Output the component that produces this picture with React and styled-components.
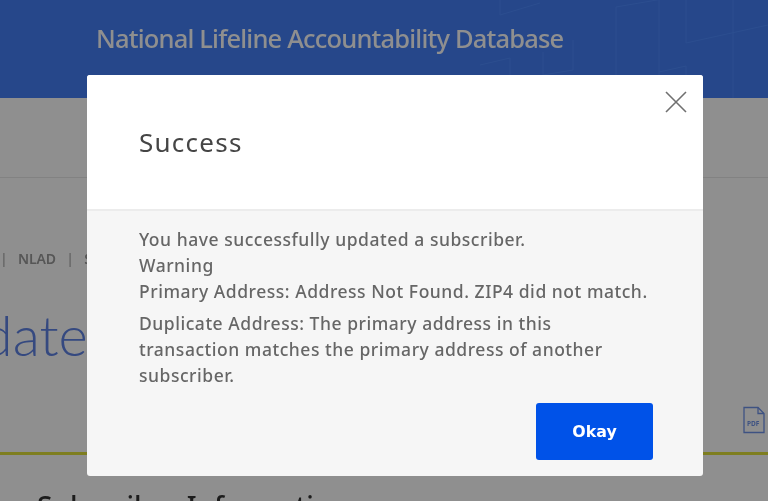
import React from "react";
import styled, { createGlobalStyle } from "styled-components";

const Global = createGlobalStyle`
  html, body { margin: 0; padding: 0; background: #fff; }
  body { font-family: "Open Sans", "Noto Sans", sans-serif; }
`;

const Viewport = styled.div`
  position: relative;
  width: 768px;
  height: 501px;
  overflow: hidden;
  filter: blur(0.5px);
`;

const Page = styled.div`
  display: flex;
  flex-direction: column;
  height: 100%;
  background: #fff;
`;

const Header = styled.header`
  position: relative;
  flex: 0 0 98px;
  box-sizing: border-box;
  padding: 21px 0 0 96px;
  background: #447ff6;
  overflow: hidden;
`;

const SiteTitle = styled.h1`
  margin: 0;
  font-family: "Noto Sans", sans-serif;
  font-size: 25.5px;
  line-height: 34px;
  font-weight: 500;
  letter-spacing: -0.82px;
  color: #fff;
`;

const HeaderLines = styled.svg`
  position: absolute;
  top: 0;
  right: 0;
  width: 300px;
  height: 98px;
  fill: none;
  stroke: #4f8bff;
  stroke-width: 1;
`;

const NavBar = styled.div`
  flex: 0 0 79px;
  border-bottom: 1px solid #e8e8e8;
`;

const Breadcrumbs = styled.div`
  flex: none;
  display: flex;
  gap: 10.3px;
  margin-top: 70px;
  height: 20px;
  align-items: center;
  font-family: "Noto Sans", sans-serif;
  font-size: 14px;
  font-weight: 600;
  letter-spacing: -0.1px;
`;

const Crumb = styled.span`
  color: ${(p) => (p.$sep ? "#b5b5b5" : "#999")};
`;

const TitleRow = styled.div`
  flex: none;
  display: flex;
  justify-content: space-between;
  height: 187px;
  box-sizing: border-box;
  border-bottom: 3px solid #e0e03a;
`;

const PageTitle = styled.h2`
  margin: 33px 0 0 -89px;
  font-family: "Lato", sans-serif;
  font-weight: 300;
  font-size: 56px;
  line-height: 68px;
  color: #5f83e4;
`;

const PdfIcon = styled.svg`
  width: 24px;
  height: 28px;
  margin: 138px 2px 0 0;
  flex: none;
`;

const SectionTitle = styled.h3`
  flex: none;
  margin: 33px 0 0 37px;
  font-family: "Noto Sans", sans-serif;
  font-weight: 500;
  font-size: 28px;
  line-height: 36px;
  white-space: nowrap;
  color: #333;
`;

const Scrim = styled.div`
  position: absolute;
  inset: 0;
  background: rgba(0, 0, 0, 0.44);
`;

const Modal = styled.div`
  position: absolute;
  left: 87px;
  top: 75px;
  width: 616px;
  height: 401px;
  display: flex;
  flex-direction: column;
  border-radius: 3px;
  overflow: hidden;
  background: #f6f6f6;
`;

const ModalHead = styled.div`
  position: relative;
  flex: 0 0 136px;
  box-sizing: border-box;
  padding: 49px 52px 0;
  background: #fff;
  border-bottom: 2px solid #ececec;
`;

const ModalTitle = styled.h4`
  margin: 0;
  font-family: "Noto Sans", sans-serif;
  font-weight: 400;
  font-size: 26px;
  line-height: 36px;
  letter-spacing: 1.25px;
  color: #454545;
`;

const Close = styled.button`
  position: absolute;
  top: 14px;
  right: 14px;
  width: 26px;
  height: 26px;
  padding: 0;
  border: 0;
  background: none;
  display: flex;
`;

const ModalBody = styled.div`
  flex: 1;
  display: flex;
  flex-direction: column;
  padding: 15px 52px 0;
  font-family: "Noto Sans", sans-serif;
  font-size: 17.5px;
  font-weight: 500;
  letter-spacing: 0.53px;
  color: #666;
`;

const Line = styled.p`
  margin: ${(p) => (p.$gap ? "6px 0 0" : "0")};
  line-height: 26px;
  white-space: pre-line;
`;

const Actions = styled.div`
  display: flex;
  justify-content: flex-end;
  margin: auto -2px 16px 0;
`;

const OkButton = styled.button`
  width: 117px;
  height: 57px;
  border: 0;
  border-radius: 3px;
  background: #0052e8;
  color: #fff;
  font-family: "DejaVu Sans", sans-serif;
  font-size: 15.8px;
  font-weight: 700;
`;

export default function App() {
  return (
    <Viewport>
      <Global />
      <Page>
        <Header>
          <SiteTitle>National Lifeline Accountability Database</SiteTitle>
          <HeaderLines viewBox="0 0 300 98">
            <path d="M32 15V0M32 15l40-12M12 65l30-7v17M75 52v23M105 40v30M75 75l30-5M148 7v68M191 0v75M218 0v43M218 43l82-18M265 0v98M148 7l70-12M191 72l27-6v9" />
          </HeaderLines>
        </Header>
        <NavBar />
        <Breadcrumbs>
          <Crumb $sep>|</Crumb>
          <Crumb>NLAD</Crumb>
          <Crumb $sep>|</Crumb>
          <Crumb>Subscribers</Crumb>
        </Breadcrumbs>
        <TitleRow>
          <PageTitle>Update</PageTitle>
          <PdfIcon viewBox="0 0 24 28" fill="none">
            <path d="M2 1.5h14l6 6v19H2z" stroke="#6f93e8" strokeWidth="1.3" />
            <path d="M16 1.5v6h6" stroke="#6f93e8" strokeWidth="1.3" />
            <text x="5" y="20" fontSize="6.5" fontFamily="Noto Sans" fontWeight="700" fill="#6f93e8">PDF</text>
          </PdfIcon>
        </TitleRow>
        <SectionTitle>Subscriber Information</SectionTitle>
      </Page>
      <Scrim />
      <Modal role="dialog">
        <ModalHead>
          <ModalTitle>Success</ModalTitle>
          <Close aria-label="Close">
            <svg width="26" height="26" viewBox="0 0 26 26" fill="none" stroke="#707070" strokeWidth="1.6">
              <path d="M3 3l20 20M23 3L3 23" />
            </svg>
          </Close>
        </ModalHead>
        <ModalBody>
          <Line>You have successfully updated a subscriber.</Line>
          <Line>Warning</Line>
          <Line>Primary Address: Address Not Found. ZIP4 did not match.</Line>
          <Line $gap>Duplicate Address: The primary address in this{"\n"}transaction matches the primary address of another{"\n"}subscriber.</Line>
          <Actions>
            <OkButton>Okay</OkButton>
          </Actions>
        </ModalBody>
      </Modal>
    </Viewport>
  );
}
